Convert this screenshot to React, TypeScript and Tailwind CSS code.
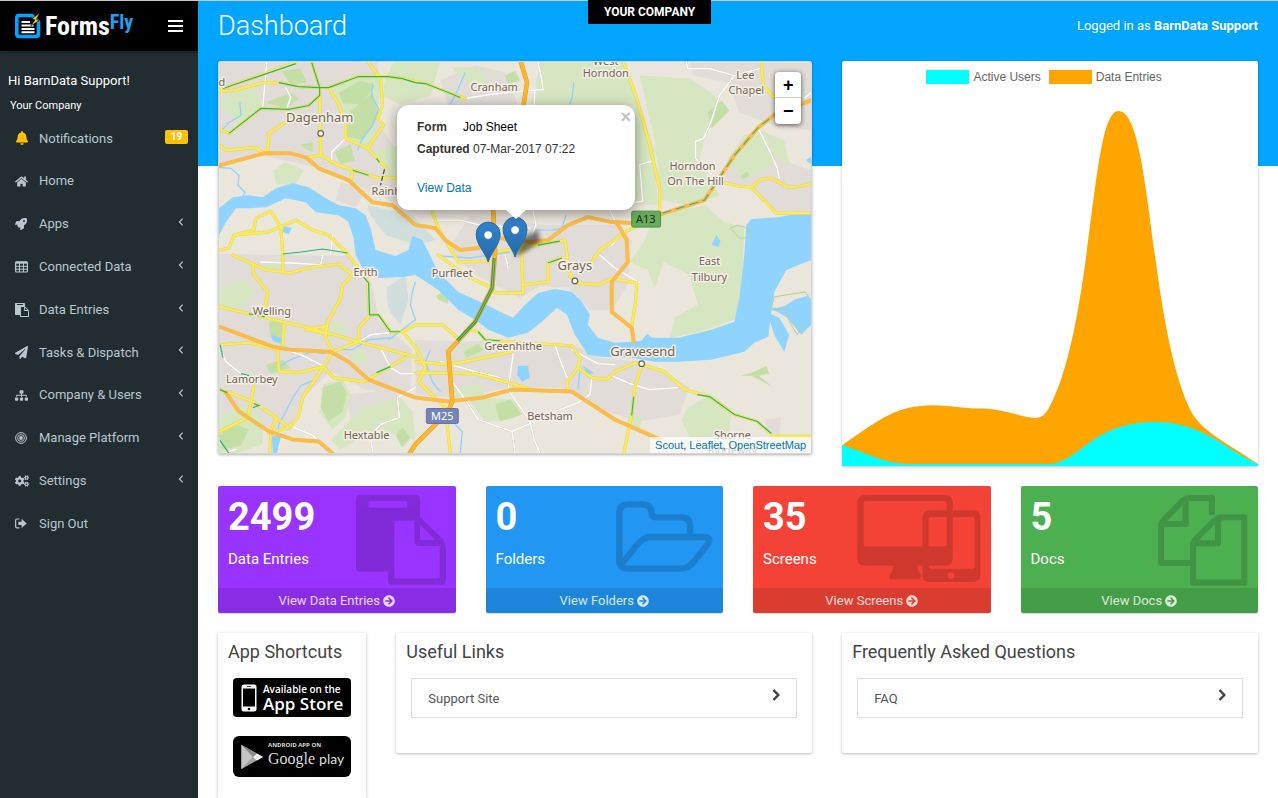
import type { ReactNode } from 'react';
import { FaBell, FaHome, FaRocket, FaPaperPlane, FaSitemap, FaCogs, FaArrowCircleRight } from 'react-icons/fa';

const PASTE_PATH =
  'M434 45H602Q614 45 614 57V112L680 175Q692 188 692 205V302Q692 314 680 314H530Q518 314 518 302V275H434Q422 275 422 263V57Q422 45 434 45ZM464 63Q459 63 459 68V78Q459 83 464 83H571Q576 83 576 78V68Q576 63 571 63ZM537 122V295H673V198H611Q597 198 597 184V122ZM614 134V180H660Z';

function PasteIcon({ className }: { className: string }) {
  return (
    <svg viewBox="422 45 270 270" fill="currentColor" fillRule="evenodd" className={className} aria-hidden="true">
      <path d={PASTE_PATH} />
    </svg>
  );
}

function TableIcon() {
  return (
    <svg viewBox="0 0 13 12" fill="none" stroke="currentColor" className="h-3 w-[13px]" aria-hidden="true">
      <rect x="0.6" y="0.8" width="11.8" height="10.2" rx="1" strokeWidth="1.2" />
      <path d="M0.6 1.7H12.4" strokeWidth="2" />
      <path d="M0.6 5.3H12.4M0.6 8.2H12.4M4.5 2V11M8.5 2V11" />
    </svg>
  );
}

function BullseyeIcon() {
  return (
    <svg viewBox="0 0 12 12" fill="none" stroke="currentColor" className="size-3" aria-hidden="true">
      <circle cx="6" cy="6" r="5.4" />
      <circle cx="6" cy="6" r="3.4" />
      <circle cx="6" cy="6" r="1.9" fill="currentColor" stroke="none" />
    </svg>
  );
}

function SignOutIcon() {
  return (
    <svg viewBox="0 0 12 11" className="h-[11px] w-3" aria-hidden="true">
      <path d="M4.4 1H2Q0.6 1 0.6 2.4V8.4Q0.6 9.8 2 9.8H4.4" fill="none" stroke="currentColor" strokeWidth="1.2" />
      <path d="M3.4 3.7H6.6V0.8L11.7 5.4L6.6 10V7.1H3.4Z" fill="currentColor" />
    </svg>
  );
}

function Chevron({ className }: { className: string }) {
  return (
    <svg viewBox="0 0 8 12" fill="none" stroke="currentColor" className={className} aria-hidden="true">
      <path d="M1.5 1L6.3 6L1.5 11" />
    </svg>
  );
}

function Logo() {
  return (
    <a href="#" className="flex items-center gap-1" aria-label="FormsFly">
      <svg viewBox="0 0 26 26" className="size-[26px]" aria-hidden="true">
        <path d="M4 2.500H17L23.500 9V21Q23.500 23.500 21 23.500H4Q1.800 23.500 1.800 21V4.700Q1.800 2.500 4 2.500Z" fill="none" stroke="#00a5ff" strokeWidth="3.600" />
        <path d="M6.500 9H15M6.500 12.500H18.500M6.500 16H19.500M6.500 19.300H19.500" stroke="#fff" strokeWidth="2" />
        <path d="M25 0L17 5.500L20 7L15.500 13L24 7.800L21.400 6.300Z" fill="#ffbe1a" stroke="#000" strokeWidth="0.600" />
      </svg>
      <span className="flex items-start font-['Roboto_Condensed','Liberation_Sans_Narrow',sans-serif] text-[26px] leading-8 font-bold text-white">
        Forms<span className="text-[20px] leading-6 text-[#1e9ff2]">Fly</span>
      </span>
    </a>
  );
}

const NAV: { label: string; icon: ReactNode; more?: boolean; badge?: string }[] = [
  { label: 'Notifications', icon: <FaBell className="size-[14px] text-[#ffc107]" />, badge: '19' },
  { label: 'Home', icon: <FaHome className="size-[13px]" /> },
  { label: 'Apps', icon: <FaRocket className="size-3" />, more: true },
  { label: 'Connected Data', icon: <TableIcon />, more: true },
  { label: 'Data Entries', icon: <PasteIcon className="size-[14px]" />, more: true },
  { label: 'Tasks & Dispatch', icon: <FaPaperPlane className="size-[13px]" />, more: true },
  { label: 'Company & Users', icon: <FaSitemap className="size-[13px]" />, more: true },
  { label: 'Manage Platform', icon: <BullseyeIcon />, more: true },
  { label: 'Settings', icon: <FaCogs className="size-[14px]" />, more: true },
  { label: 'Sign Out', icon: <SignOutIcon /> },
];

function Sidebar() {
  return (
    <aside className="w-[198px] shrink-0 bg-[#222d32] text-[#b8c7ce]">
      <div className="flex h-[51px] items-center justify-between border-t border-[#c8c8c8] bg-black px-[15px] shadow-[0_1px_3px_rgba(0,0,0,0.4)]">
        <Logo />
        <button type="button" aria-label="Toggle menu" className="flex w-[15px] flex-col gap-[3px]">
          <span className="h-0.5 bg-white" />
          <span className="h-0.5 bg-white" />
          <span className="h-0.5 bg-white" />
        </button>
      </div>
      <div className="px-2 pt-5 text-white">
        <p className="text-[13px] leading-5">Hi BarnData Support!</p>
        <p className="px-0.5 pt-1 text-[11px] leading-[22px]">Your Company</p>
      </div>
      <nav className="grid h-[428px] grid-rows-10 text-[13px]">
        {NAV.map((item) => (
          <a key={item.label} href="#" className="flex items-center pr-3.5 pl-[15px] hover:text-white">
            <span className="flex w-6 items-center">{item.icon}</span>
            <span className="flex-1">{item.label}</span>
            {item.badge && (
              <span className="-mr-1 mb-0.5 w-[23px] rounded-xs bg-[#ffc107] text-center text-[10px] leading-[14px] font-bold text-white">
                {item.badge}
              </span>
            )}
            {item.more && <Chevron className="mb-1 h-2 w-1.5 rotate-180 stroke-[1.8]" />}
          </a>
        ))}
      </nav>
    </aside>
  );
}

// Map geometry, drawn in one shared coordinate space
const THAMES =
  'M218 208L232 197L248 195L262 197L275 188L292 183L308 187L325 198L338 205L355 208L365 215L370 228L375 250L395 256L408 250L412 236L422 240L438 272L458 292L482 303L502 313L513 318L525 305L538 293L555 289L572 292L582 302L590 315L588 325L598 338L615 343L632 342L642 341L645 337L648 334L652 338L679 338L712 330L735 322L740 298L745 255L747 225L752 219L779 217L795 214L812 212V260L787 270L775 292L772 312L769 337L755 343L745 352L712 360L679 362L655 362L632 358L602 357L588 355L575 335L567 315L557 308L542 322L528 333L508 338L488 330L478 322L458 310L438 290L415 275L402 277L378 278L362 268L355 255L353 238L348 222L338 215L315 212L305 202L285 198L265 207L248 208L235 208L225 222L218 235Z';

const URBAN = [
  'M218 61H378L376 120L396 150L400 205L350 182L318 168L262 155L218 165Z',
  'M218 254L348 256L362 270L372 285L378 320L412 350L410 395L365 390L330 372L300 400L290 432L218 420Z',
  'M415 340L460 342L506 340L580 348L600 358L640 362L665 372L690 388L680 415L640 422L600 410L560 388L512 388L450 398L415 395Z',
  'M470 215L545 225L620 225L632 240L628 285L612 310L590 310L570 288L540 286L520 298L470 272L448 250Z',
  'M475 65L505 72L520 110L450 112L440 80Z',
  'M690 62H812V130L775 125L740 112L728 82L694 75Z',
  'M742 145L765 130L790 162L812 170V212L775 210L750 188L715 182Z',
  'M340 182L366 190L355 207L335 200Z',
  'M345 395L395 390L402 410L350 420Z',
  'M765 420L782 418L780 436L768 432Z',
];

const FIELDS = [
  'M393 61H440L430 95L400 104L382 96L385 78Z',
  'M540 61H625L640 105L655 150L658 205L635 204L635 105H530L535 90Z',
  'M640 75L690 78L715 95L722 108L706 135L700 160L710 180L720 195L690 205L662 200L655 140Z',
  'M655 215L705 205L725 222L745 228L742 300L735 320L700 332L670 338L675 318L698 305L690 275L664 262L655 288L648 270L630 262L645 240Z',
  'M728 160L745 135L765 130L775 165L745 180Z',
  'M218 104L232 90L255 88L262 105L240 125Z',
  'M328 86L355 76L380 80L378 110L370 145L345 138L340 105Z',
  'M375 150L398 145V182L385 175Z',
  'M273 170L285 162L303 170L295 184L275 184Z',
  'M218 290L242 278L255 292L240 308L218 306Z',
  'M218 418L240 405L262 418L262 445L235 454H218Z',
  'M322 385L342 380L350 395L345 418L332 430L318 412L325 405Z',
  'M362 408L400 398L412 412L415 440L375 430L340 450L330 440Z',
  'M466 386L482 384L485 398L512 400L525 412L512 420L485 422L470 402L455 400L452 390Z',
  'M462 346L485 342L485 352L465 360Z',
  'M688 408L712 395L732 410L730 438H690L682 420Z',
  'M760 130L785 140L790 165L775 155Z',
  'M450 66L478 68L490 82L470 84Z',
  'M530 108L560 112L562 130L532 125Z',
  'M262 262L282 260L280 272L262 268Z',
  'M322 328L340 320L348 332L330 338Z',
  'M350 355L362 348L368 360L355 366Z',
  'M628 412L642 418L640 430L628 424Z',
];

const WOODS = [
  'M342 118L372 92L378 115L362 140L346 136Z',
  'M338 92L360 80L375 85L360 104L342 103Z',
  'M334 152L350 144L354 160L340 164Z',
  'M265 102L290 92L298 98L285 108Z',
  'M268 322L283 322L280 340L270 338Z',
  'M322 388L340 382L346 394L342 412L328 422L320 408Z',
  'M495 405L510 400L522 415L500 422Z',
  'M463 352L478 344L484 350L466 358Z',
  'M708 112L722 100L730 110L712 128Z',
  'M436 296L446 289L448 304L438 300Z',
  'M265 365L282 360L290 368L270 374Z',
  'M741 376L755 372L767 366L770 374L760 376L774 388L752 376Z',
  'M395 436L402 428L410 438L402 448Z',
  'M280 70L300 68L306 82L290 84Z',
  'M218 436L232 424L248 430L240 446L222 450Z',
  'M505 75L515 70L520 80L508 84Z',
  'M741 176L748 171L750 175L744 179Z',
  'M300 144L312 142L312 152L304 148Z',
];

const LAKES = [
  'M771 310L786 306L795 300L808 296L812 300V325L802 335L788 318L778 312Z',
  'M768 313L780 318L790 335L785 352L775 335Z',
  'M713 243L717 235L721 241L719 247L713 245Z',
  'M518 366L528 366L530 378L522 382L517 375Z',
  'M583 366L594 373L588 376Z',
  'M270 335L283 339L280 344L272 341Z',
  'M271 436L280 437L276 454H272Z',
  'M807 160L812 156V164Z',
  'M283 226L291 228L288 234L282 232Z',
];

const STREAMS = [
  'M218 167L230 168L238 175L237 185L244 192L240 200',
  'M239 102L240 115L228 122L219 132',
  'M372 82L371 95L378 108L372 125L362 138L357 150',
  'M465 72L458 88L450 104',
  'M574 82L572 98L568 108',
  'M415 282L412 292L410 305L415 320L408 325L395 335L388 340',
  'M315 380L300 386L292 398L285 412L278 425L276 440',
  'M278 367L290 360L312 352L322 354L338 350L352 350L368 340L392 338',
  'M440 256L470 258L495 254L510 252',
  'M536 230L552 230L562 228L566 215',
  'M430 350L425 362L432 382L440 392',
  'M455 425L462 432L460 454',
  'M578 390L580 372',
];

const WHITE_ROADS = [
  'M266 61L262 106M285 87L290 97L286 108',
  'M345 138L331 152L331 161',
  'M332 235L330 254M322 255L320 265L292 263L260 262',
  'M465 98L490 94L525 90L543 89L542 80L538 62',
  'M535 90L534 106',
  'M687 62L688 68L710 68L735 75L760 68',
  'M735 75L720 95L712 120L704 138L696 141L696 158L712 174',
  'M760 130L770 150L778 168L780 178',
  'M652 161L640 164L643 201L620 205',
  'M432 220L460 220L480 225L530 228M533 210L536 225L532 235',
  'M505 255L508 268M600 255L615 268L640 283',
  'M219 348L225 362L240 374L252 380',
  'M283 350L300 355L322 366M293 428L312 436L332 454',
  'M381 350L390 368L400 374L415 374M358 342L370 335L388 333',
  'M415 388L397 398L399 418L380 425L370 436L372 452',
  'M448 368L452 382L465 400L478 420L512 432L535 422L560 410L580 402L590 395L592 378',
  'M508 340L513 355L508 390L530 422L534 440L540 454M512 432L515 454',
  'M555 345L560 360L568 380M572 350L598 364L615 365',
  'M612 376L630 384L650 390L678 388',
  'M440 362L475 372L500 378M610 210L622 235L612 245',
  'M805 98L812 92M218 455L235 450',
];

const YELLOW_ROADS = [
  'M219 91L232 90L263 82L278 82L298 86L319 87L328 87L358 76L388 76L402 78L425 83L448 92L465 98',
  'M219 89L295 62',
  'M311 62L319 87L319 95L308 105L288 109L260 108L228 133L219 129',
  'M319 95L320 155M352 170L350 183',
  'M328 87L337 102L345 123L345 138L367 148L385 167',
  'M368 62L380 78L382 105L377 118L383 125L367 148',
  'M219 145L225 150L255 147L260 152L267 150L268 133L295 115',
  'M307 157L320 155L338 165L375 177L397 178',
  'M219 250L228 248L233 235L253 230L255 218L270 211L280 227L282 254V272',
  'M233 235L267 232L295 220L312 230L328 235L347 254',
  'M232 255L265 270L288 273L312 267L338 264L352 275L342 285L340 298L327 322L325 338L332 352L323 367',
  'M252 265L253 275L267 292L264 308',
  'M219 307L265 318L308 328L362 343L415 357',
  'M305 330L325 326L325 334L308 330',
  'M283 325L282 345L277 352L278 372L298 373L323 367L333 378L363 382L388 368L405 358',
  'M219 345L248 343L277 350',
  'M323 367L302 398L297 418L288 428L270 433L269 454',
  'M219 390L252 402L275 418L288 428M253 385L247 418L219 432',
  'M332 352L358 342L358 328L370 315M275 420L268 434',
  'M347 254L367 280L369 315L378 315L390 332L402 332L415 325L442 325L457 338',
  'M402 332L415 347L425 368L418 382L445 408L450 454',
  'M432 212L438 228L458 262L490 261M438 255L468 277L490 287L495 293L523 293L522 268L523 230',
  'M523 285L548 282L548 263L562 258L575 283L598 285L615 277',
  'M495 252L538 245L565 240L568 262M592 262L600 250L615 240L625 232L655 218',
  'M470 330L478 332L485 340L508 342L572 346L580 358L578 368L567 382L568 390',
  'M578 368L592 378L607 380L615 372L636 363L665 372L685 390L710 397L735 415L758 422L774 437L812 437',
  'M415 362L448 365L465 362L512 352M415 373L475 374L508 383L532 390',
  'M624 62L637 98L650 145L660 188L660 212',
  'M724 182L740 186L752 187L762 179L772 178L780 182L789 187L802 186L812 183M752 187L777 213L812 213',
  'M762 62L764 85L775 97',
  'M618 280L637 283L636 300L632 327M642 365L635 388L632 415L624 454',
];

const ORANGE_ROADS = [
  'M219 165L263 153L290 153L305 157L318 168L348 180L372 202L392 205L415 225L435 228L445 240L460 250L478 248L492 235L508 240L532 242L548 240L568 225L588 217L612 222L632 223L662 214L705 200L735 155L759 127L778 112L812 100',
  'M219 327L272 347L290 350L330 352L348 362L368 380L415 398L448 402L482 398L512 390L572 392L615 420L660 440',
  'M225 393L238 412L268 432L292 440L318 442L332 454',
  'M617 223L627 240L628 262L612 282L612 312L632 328L634 342',
];

const TRAFFIC = [
  'M222 88L295 63M311 62L319 87L319 95L308 105L288 109L260 108L228 133',
  'M278 82L298 86L319 87L328 87L358 76L388 76L402 78L415 82L425 83L448 92L460 97',
  'M282 254L300 252L322 249L347 253M363 277L368 283L369 315L378 315L390 332L400 332',
  'M352 170L368 175M376 158L379 162M248 314L264 317M376 373L390 367',
  'M538 245L560 241M548 263L562 258',
  'M219 345L222 358M240 374L248 376M219 390L226 393M253 404L258 406L252 408M219 441L228 454',
  'M478 332L485 340L500 341M634 397L632 416M698 395L710 397L735 415L758 422L772 434',
];

function MapRoads({ roads, casing, color, width }: { roads: string[]; casing: string; color: string; width: number }) {
  return (
    <g fill="none" strokeLinejoin="round" strokeLinecap="round">
      {roads.map((d) => (
        <path key={`casing-${d}`} d={d} stroke={casing} strokeWidth={width + 1} />
      ))}
      {roads.map((d) => (
        <path key={d} d={d} stroke={color} strokeWidth={width} />
      ))}
    </g>
  );
}

const VILLAGES: [string, number, number][] = [
  ['Cranham', 494, 90],
  ['West', 606, 64],
  ['Horndon', 606, 76],
  ['Lee', 746, 78],
  ['Chapel', 747, 93],
  ['Horndon', 693, 170],
  ['On The Hill', 696, 185],
  ['Rainham', 394, 195],
  ['Erith', 365, 276],
  ['Purfleet', 452, 277],
  ['Welling', 271, 315],
  ['Lamorbey', 251, 383],
  ['Hextable', 366, 440],
  ['Greenhithe', 513, 350],
  ['Betsham', 550, 421],
  ['East', 710, 265],
  ['Tilbury', 710, 281],
  ['Shorne', 733, 440],
  ['Ridgeway', 733, 455],
  ['d', 221, 85],
];

const TOWNS: [string, number, number, number, number][] = [
  ['Dagenham', 319, 122, 320, 133],
  ['Grays', 575, 270, 575, 281],
  ['Gravesend', 643, 356, 642, 364],
];

function MapMarker({ x, y }: { x: number; y: number }) {
  return (
    <g transform={`translate(${x} ${y})`}>
      <path d="M0 0C-3 -10 -12 -17 -12 -28A12 12 0 0 1 12 -28C12 -17 3 -10 0 0Z" fill="url(#pin)" stroke="#2e6c97" />
      <circle cx="0" cy="-27" r="4.2" fill="#fff" stroke="#2e6c97" strokeWidth="0.6" />
    </g>
  );
}

function AreaMap() {
  return (
    <section className="relative col-span-7 h-[393px] overflow-hidden rounded-xs border border-[#d5d5d5] shadow-[0_1px_3px_rgba(0,0,0,0.3)]">
      <svg viewBox="218 61 594 393" preserveAspectRatio="xMidYMid slice" className="h-full w-full" role="img" aria-label="Map of captured entries">
        <defs>
          <linearGradient id="pin" x1="0" y1="0" x2="0" y2="1">
            <stop offset="0" stopColor="#2f84d0" />
            <stop offset="1" stopColor="#2569a8" />
          </linearGradient>
          <filter id="soft" x="-50%" y="-50%" width="200%" height="200%">
            <feGaussianBlur stdDeviation="2" />
          </filter>
        </defs>
        <rect x="218" y="61" width="594" height="393" fill="#ebe6dc" />
        <g fill="#e1dcd7">{URBAN.map((d) => <path key={d} d={d} />)}</g>
        <g fill="#d6e6c0">{FIELDS.map((d) => <path key={d} d={d} />)}</g>
        <g fill="#c3dfa6">{WOODS.map((d) => <path key={d} d={d} />)}</g>
        <path d="M367 205L412 215L435 240L415 245L385 235L370 215ZM386 288L405 275L408 300L400 325L388 310Z" fill="#d0dedd" />
        <g fill="#8fd3ff">{LAKES.map((d) => <path key={d} d={d} />)}</g>
        <g fill="none" stroke="#8fd3ff" strokeWidth="1.3">{STREAMS.map((d) => <path key={d} d={d} />)}</g>
        <path d={THAMES} fill="#8fd3ff" />
        <path d="M772 308L775 297L806 292L812 300M772 308L785 310L792 325L798 335L804 325M731 228L738 225L745 227L752 231L751 238L740 238Z" fill="none" stroke="#b4d096" />
        <MapRoads roads={WHITE_ROADS} casing="#ded8d0" color="#ffffff" width={1.3} />
        <MapRoads roads={YELLOW_ROADS} casing="#e3d465" color="#fcec52" width={2.2} />
        <MapRoads roads={ORANGE_ROADS} casing="#edc04e" color="#fdbb4b" width={3} />
        <MapRoads
          roads={['M521 62L527 82L523 108L510 160L493 210L495 252L492 288L475 322L457 342L448 352L452 402L448 412L415 445L408 456']}
          casing="#e39d22"
          color="#fdb62f"
          width={3.6}
        />
        <path d="M494 258L492 288L475 322L457 341" fill="none" stroke="#2a9d5c" strokeWidth="3" />
        <path d="M494 258L492 288L475 322L457 341" fill="none" stroke="#d8b84a" strokeWidth="0.8" />
        <g fill="none" stroke="#22b573" strokeWidth="1.2">{TRAFFIC.map((d) => <path key={d} d={d} />)}</g>
        <path d="M663 213L705 200L735 155L759 127L778 112" fill="none" stroke="#4fae78" strokeWidth="1.2" strokeDasharray="9 5" />
        <path d="M384 169L380 185" stroke="#555" strokeWidth="1.3" strokeDasharray="5 2" />
        <g className="font-['Noto_Sans',sans-serif] text-[11px]" fill="#786550" textAnchor="middle" stroke="#f3efe9" strokeWidth="3" strokeLinejoin="round" paintOrder="stroke">
          {VILLAGES.map(([name, x, y]) => (
            <text key={`${name}-${x}-${y}`} x={x} y={y}>{name}</text>
          ))}
          <g className="text-[13px]">
            {TOWNS.map(([name, x, y]) => (
              <text key={name} x={x} y={y}>{name}</text>
            ))}
          </g>
        </g>
        <g fill="#fff" stroke="#6f6152" strokeWidth="1.2">
          {TOWNS.map(([name, , , cx, cy]) => (
            <circle key={name} cx={cx} cy={cy} r="2.8" />
          ))}
        </g>
        <g className="font-['Noto_Sans',sans-serif] text-[11px]" textAnchor="middle">
          <rect x="632" y="211" width="29" height="16" rx="1.500" fill="#67ab5b" stroke="#4d8f45" />
          <text x="646" y="223" fill="#1d2b1a">A13</text>
          <rect x="426" y="409" width="32" height="15" rx="1.500" fill="#7585b8" stroke="#6473a5" />
          <text x="442" y="421" fill="#fff">M25</text>
        </g>
        <path d="M515 257L522 238L538 230L540 242L528 250Z" fill="#000" opacity="0.5" filter="url(#soft)" />
        <MapMarker x={488} y={262} />
        <MapMarker x={515} y={257} />
      </svg>

      {/* Popup anchored on the second marker */}
      <div className="absolute top-[43px] left-[178px] h-[105px] w-[238px] rounded-xl bg-white px-5 py-[11px] font-['Liberation_Sans',sans-serif] text-[12px] leading-[22px] text-[#333] shadow-[0_3px_14px_rgba(0,0,0,0.4)]">
        <p className="flex gap-4"><b>Form</b><span className="text-black">Job Sheet</span></p>
        <p><b>Captured</b> 07-Mar-2017 07:22</p>
        <a href="#" className="mt-[17px] block text-[#0078a8]">View Data</a>
        <button type="button" aria-label="Close popup" className="absolute top-1 right-1 text-[18px] leading-4 font-bold text-[#c3c3c3]">×</button>
        <svg viewBox="0 0 20 10" className="absolute top-full left-[109px] h-2.5 w-5" aria-hidden="true">
          <path d="M0 0H20L10 9Z" fill="#fff" />
        </svg>
      </div>

      <div className="absolute top-2.5 right-2.5 w-[26px] overflow-hidden rounded-sm bg-white font-['Liberation_Sans',sans-serif] text-[18px] leading-[26px] font-bold text-black shadow-[0_1px_5px_rgba(0,0,0,0.65)]">
        <button type="button" className="block h-[26px] w-full border-b border-[#ccc]">+</button>
        <button type="button" className="block h-[26px] w-full">−</button>
      </div>

      <p className="absolute right-0 bottom-0 bg-white/70 px-[5px] font-['Liberation_Sans',sans-serif] text-[11px] leading-4 text-[#333]">
        <a href="#" className="text-[#0078a8]">Scout</a>, <a href="#" className="text-[#0078a8]">Leaflet</a>,{' '}
        <a href="#" className="text-[#0078a8]">OpenStreetMap</a>
      </p>
    </section>
  );
}

function UsageChart() {
  return (
    <section className="col-span-5 h-[405px] rounded-xs bg-white pt-1.5 font-['Liberation_Sans',sans-serif] text-[12px] text-[#666] shadow-[0_1px_3px_rgba(0,0,0,0.25)]">
      <div className="flex h-5 items-center justify-center gap-2 pr-3">
        <span className="flex items-center gap-1"><i className="h-3.5 w-[43px] bg-[#00ffff]" />Active Users</span>
        <span className="flex items-center gap-1"><i className="h-3.5 w-[43px] bg-[#ffa500]" />Data Entries</span>
      </div>
      <svg viewBox="842 87 416 379" preserveAspectRatio="none" className="h-[379px] w-full" role="img" aria-label="Active users and data entries over time">
        <path
          d="M842 445C870 427 889 409 920 406C942 403 962 409 982 408.500C1004 409 1018 416 1034 418C1041 418 1044 416 1049 408C1094 325 1090 111 1118.500 111C1152 111 1148 315 1189 407C1199 431 1228 443 1258 464V466H842Z"
          fill="#ffa500"
        />
        <path d="M842 445C870 454 885 464 911 464H1050C1080 462 1092 422 1155 422C1205 422 1230 453 1258 464V466H842Z" fill="#00ffff" />
      </svg>
    </section>
  );
}

function FolderIcon() {
  return (
    <svg viewBox="1203 63 291 213" fill="none" stroke="currentColor" strokeWidth="19" strokeLinejoin="round" className="h-[71px] w-[97px]" aria-hidden="true">
      <path d="M1213 245V100Q1213 73 1240 73H1283Q1309 73 1309 97Q1309 112 1325 112H1400Q1425 112 1425 136V165" />
      <path d="M1222 250L1268 192Q1288 171 1305 171H1465Q1490 171 1480 190L1438 243Q1420 266 1398 266H1240Q1213 266 1213 238" />
    </svg>
  );
}

function ScreensIcon() {
  return (
    <svg viewBox="345 45 366 258" fill="currentColor" fillRule="evenodd" className="h-[87px] w-[124px]" aria-hidden="true">
      <path d="M369 45H604Q628 45 628 69V231Q628 255 604 255H522Q524 272 534 284Q534 295 524 295H449Q439 295 440 286Q451 272 453 255H369Q345 255 345 231V69Q345 45 369 45ZM371 63Q364 63 364 70V191Q364 198 371 198H603Q610 198 610 191V70Q610 63 603 63Z" />
      <path d="M560 90H688Q710 90 710 112V281Q710 303 688 303H560Q538 303 538 281V112Q538 90 560 90ZM562 110Q556 110 556 116V258Q556 264 562 264H687Q693 264 693 258V116Q693 110 687 110ZM623 274A10 10 0 1 0 623 294A10 10 0 1 0 623 274Z" />
    </svg>
  );
}

function DocsIcon() {
  return (
    <svg viewBox="1236 45 268 270" fill="none" stroke="currentColor" strokeWidth="18" strokeLinejoin="round" className="size-[91px]" aria-hidden="true">
      <path d="M1333 247H1247V140Q1247 127 1257 117L1310 64Q1320 54 1335 54H1398V104" />
      <path d="M1320 58V131H1250" />
      <path d="M1342 305V196Q1342 184 1352 174L1405 121Q1415 111 1430 111H1494V305Z" />
      <path d="M1416 115V188H1346" />
    </svg>
  );
}

const STATS: { value: number; label: string; color: string; icon: ReactNode; place: string }[] = [
  { value: 2499, label: 'Data Entries', color: 'bg-[#9933ff]', icon: <PasteIcon className="size-[90px]" />, place: 'top-[9px]' },
  { value: 0, label: 'Folders', color: 'bg-[#2196f3]', icon: <FolderIcon />, place: 'top-[15px]' },
  { value: 35, label: 'Screens', color: 'bg-[#f44336]', icon: <ScreensIcon />, place: 'top-[9px]' },
  { value: 5, label: 'Docs', color: 'bg-[#4caf50]', icon: <DocsIcon />, place: 'top-[9px]' },
];

function StatCard({ value, label, color, icon, place }: (typeof STATS)[number]) {
  return (
    <section className={`relative col-span-3 overflow-hidden rounded-xs text-white shadow-[0_1px_1px_rgba(0,0,0,0.15)] ${color}`}>
      <div className={`absolute right-2.5 text-black opacity-15 ${place}`}>{icon}</div>
      <div className="h-[102px] px-2.5 pt-2.5">
        <h3 className="text-[38px] leading-[42px] font-bold">{value}</h3>
        <p className="pt-2.5 text-[15px] leading-[22px]">{label}</p>
      </div>
      <a href="#" className="relative flex h-[25px] items-center justify-center gap-[3px] bg-black/10 text-[13px] text-white/80 hover:text-white">
        View {label} <FaArrowCircleRight className="size-3" />
      </a>
    </section>
  );
}

function LinkPanel({ title, link }: { title: string; link: string }) {
  return (
    <section className="col-span-5 h-[120px] rounded-xs bg-white px-2.5 pt-[7px] shadow-[0_1px_3px_rgba(0,0,0,0.25)]">
      <h2 className="text-[18px] leading-6 text-[#444]">{title}</h2>
      <a href="#" className="mx-[5px] mt-3.5 flex h-10 items-center justify-between border border-[#ddd] px-4 pt-0.5 text-[13px] text-[#555]">
        {link}
        <Chevron className="mb-2 h-3 w-2 stroke-[2.5] text-[#444]" />
      </a>
    </section>
  );
}

function AppShortcuts() {
  return (
    <section className="col-span-2 bg-white px-2.5 pt-[7px] shadow-[0_1px_3px_rgba(0,0,0,0.25)]">
      <h2 className="text-[18px] leading-6 text-[#444]">App Shortcuts</h2>
      <a href="#" className="mx-[5px] mt-3.5 flex h-[39px] items-center gap-1.5 rounded-sm bg-black pl-2 font-['Open_Sans',sans-serif] text-white">
        <svg viewBox="0 0 16 28" className="h-7 w-4 shrink-0" aria-hidden="true">
          <rect x="0.500" y="0.500" width="15" height="27" rx="2.500" fill="#fff" />
          <rect x="2" y="4.500" width="12" height="18" fill="#000" />
          <rect x="6" y="2" width="4" height="1" fill="#555" />
          <circle cx="8" cy="25" r="1.300" fill="#000" />
        </svg>
        <span className="whitespace-nowrap">
          <span className="block text-[10px] leading-3 font-semibold">Available on the</span>
          <span className="block text-[17px] leading-[18px] font-semibold">App Store</span>
        </span>
      </a>
      <a href="#" className="mx-[5px] mt-[19px] flex h-[41px] items-center gap-1 rounded-md bg-black pl-2 text-[#ddd]">
        <svg viewBox="0 0 23 26" className="h-[26px] w-[23px] shrink-0" aria-hidden="true">
          <path d="M0.500 1L22 13L0.500 25Z" fill="#a5a5a5" />
          <path d="M0.500 1L16 9.500L0.500 25Z" fill="#8a8a8a" />
          <path d="M0.500 1L12 13L0.500 25Z" fill="#c4c4c0" />
          <path d="M16 9.500L22 13L16 16.500L12 13Z" fill="#eee" />
        </svg>
        <span className="pb-1 whitespace-nowrap">
          <span className="block font-['Open_Sans',sans-serif] text-[6px] leading-2 font-bold">ANDROID APP ON</span>
          <span className="flex items-baseline gap-1 leading-5">
            <span className="font-['Liberation_Serif',serif] text-[16px]">Google</span>
            <span className="font-['Lato',sans-serif] text-[14px]">play</span>
          </span>
        </span>
      </a>
    </section>
  );
}

export default function App() {
  return (
    <div className="relative flex min-h-screen bg-[#fefefe] font-['Roboto',sans-serif]">
      <Sidebar />
      <main className="relative flex min-w-0 flex-1 flex-col">
        {/* Blue band behind the header and the top of the panels */}
        <div className="absolute inset-x-0 top-0 h-[166px] border-t border-[#c8c8c8] bg-[#00a5ff]" />
        <header className="relative flex h-[61px] items-start justify-between px-5 pt-2.5 text-white">
          <h1 className="text-[27px] leading-8 font-light">Dashboard</h1>
          <p className="text-[13px] leading-8">
            Logged in as <b>BarnData Support</b>
          </p>
        </header>
        <div className="relative grid flex-1 grid-cols-12 grid-rows-[405px_127px_1fr] gap-x-[30px] gap-y-5 px-5">
          <AreaMap />
          <UsageChart />
          {STATS.map((stat) => (
            <StatCard key={stat.label} {...stat} />
          ))}
          <AppShortcuts />
          <LinkPanel title="Useful Links" link="Support Site" />
          <LinkPanel title="Frequently Asked Questions" link="FAQ" />
        </div>
      </main>
      <div className="absolute top-0 left-[46%] bg-black px-4 pt-px text-[12px] leading-[23px] font-bold text-white">YOUR COMPANY</div>
    </div>
  );
}
